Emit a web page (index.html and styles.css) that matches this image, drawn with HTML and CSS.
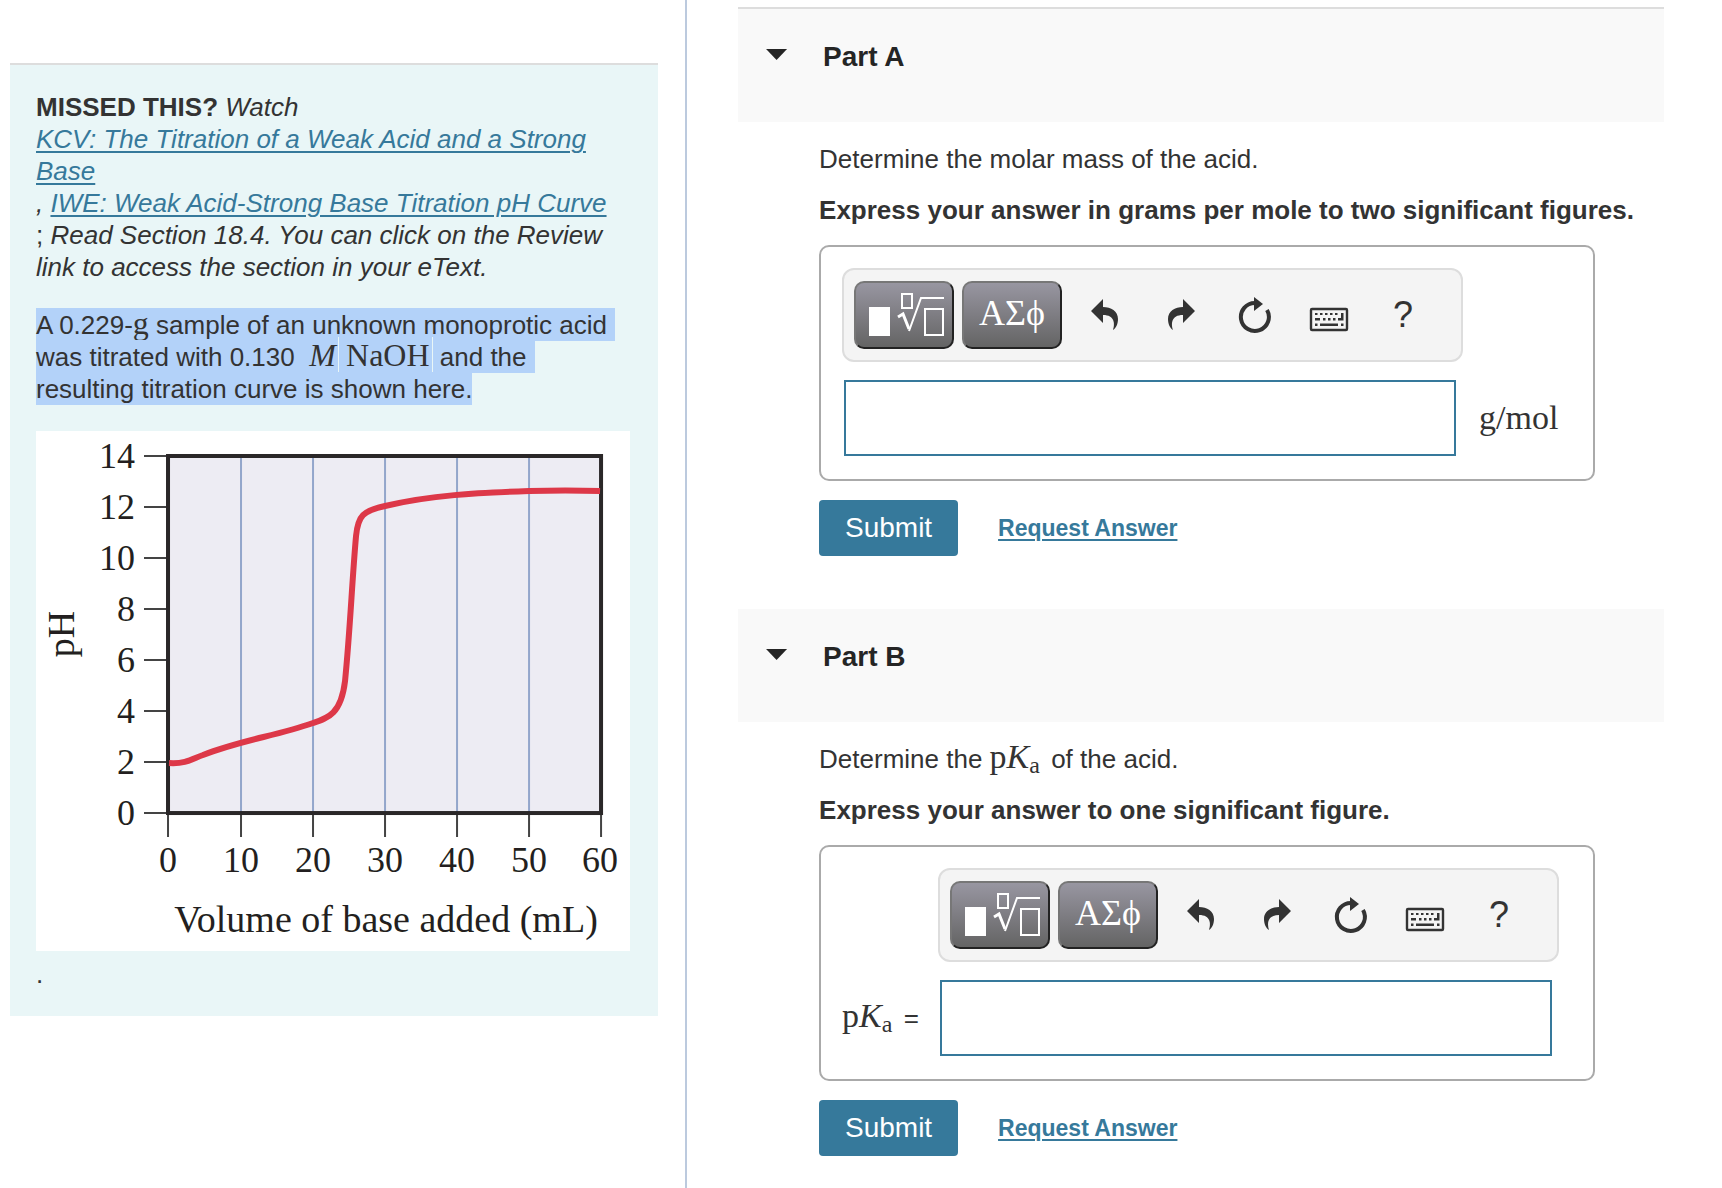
FILE: index.html
```html
<!DOCTYPE html>
<html lang="en">
<head>
    <meta charset="UTF-8">
    <meta name="viewport" content="width=device-width, initial-scale=1.0">
    <title>Titration Problem</title>
    <link rel="stylesheet" href="styles.css">
</head>
<body>
    <!-- Shared icons -->
    <svg class="icon-defs" width="0" height="0" aria-hidden="true">
        <symbol id="icon-template" viewBox="0 0 96 64">
            <rect x="13" y="24" width="21" height="29" fill="#fff"/>
            <g fill="none" stroke="#fff" stroke-width="2">
                <rect x="46" y="11" width="10" height="14"/>
                <rect x="69" y="26" width="18" height="26"/>
                <path d="M53 48 L65 15 H88"/>
                <path d="M42 34 L47 31 L53 46" stroke-width="3"/>
            </g>
        </symbol>
        <symbol id="icon-undo" viewBox="0 0 40 40">
            <path d="M4 16 L16 4 V12 C24 12 31 16 31 24 C31 29 29 33 26 35 C28 29 28 20 16 20 V28 Z"/>
        </symbol>
        <symbol id="icon-redo" viewBox="0 0 40 40">
            <path d="M34 16 L22 4 V12 C14 12 7 16 7 24 C7 29 9 33 12 35 C10 29 10 20 22 20 V28 Z"/>
        </symbol>
        <symbol id="icon-reset" viewBox="0 0 40 40">
            <path d="M32 15 A14 14 0 1 1 20 8" fill="none" stroke="#333" stroke-width="4"/>
            <path d="M19 2 L28 9 L19 16 Z"/>
        </symbol>
        <symbol id="icon-keyboard" viewBox="0 0 40 40">
            <rect x="2" y="14" width="36" height="21" rx="1" fill="none" stroke="#333" stroke-width="2.4"/>
            <path d="M6 18h2.5v2H6z M11 18h2.5v2H11z M16 18h2.5v2H16z M21 18h2.5v2H21z M26 18h2.5v2H26z"/>
            <path d="M6 23h5v2.5H6z M14 23h2.5v2.5H14z M19 23h2.5v2.5H19z M24 23h2.5v2.5H24z M32 18h2.5v7.5H29V23h3z"/>
            <path d="M6 28.5h2.5V31H6z M11 28.5h18V31H11z M32 28.5h2.5V31H32z"/>
        </symbol>
    </svg>

    <div class="page">
        <aside class="left">
            <div class="problem">
                <p><strong>MISSED THIS?</strong> <em>Watch<br>
                    <a href="#">KCV: The Titration of a Weak Acid and a Strong Base</a><br>
                    , <a href="#">IWE: Weak Acid-Strong Base Titration pH Curve</a></em><br>
                    ; <em>Read Section 18.4. You can click on the Review link to access the section in your eText.</em></p>

                <p class="question">
                    <span class="selected pad-end">A 0.229-<span class="math">g</span> sample of an unknown monoprotic acid</span><br>
                    <span class="selected pad-end">was titrated with 0.130 &nbsp;<i class="math unit-end">M</i> <span class="math unit-end">NaOH</span> and the</span><br>
                    <span class="selected">resulting titration curve is shown here.</span>
                </p>

                <svg class="chart" viewBox="0 0 594 520" role="img" aria-label="Titration curve">
                    <rect width="594" height="520" fill="#fff"/>
                    <rect x="132" y="25" width="433" height="357" fill="#edecf3"/>
                    <g class="grid-lines">
                        <path d="M205 25V382 M277 25V382 M349 25V382 M421 25V382 M493 25V382"/>
                    </g>
                    <g class="ticks">
                        <path d="M108 25H132 M108 76H132 M108 127H132 M108 178H132 M108 229H132 M108 280H132 M108 331H132 M108 382H132"/>
                        <path d="M132 382V406 M205 382V406 M277 382V406 M349 382V406 M421 382V406 M493 382V406 M565 382V406"/>
                    </g>
                    <rect class="frame" x="132" y="25" width="433" height="357"/>
                    <path class="curve" d="M133 332 C150 333 156 328 167 324 C205 309 240 305 277 292 C292 287 305 283 309 250 C314 200 316 150 320 105 C322 84 327 80 349 75 C395 64 440 62 493 60 Q530 59 564 60"/>
                    <g class="y-labels">
                        <text x="99" y="37">14</text>
                        <text x="99" y="88">12</text>
                        <text x="99" y="139">10</text>
                        <text x="99" y="190">8</text>
                        <text x="99" y="241">6</text>
                        <text x="99" y="292">4</text>
                        <text x="99" y="343">2</text>
                        <text x="99" y="394">0</text>
                    </g>
                    <g class="x-labels">
                        <text x="132" y="441">0</text>
                        <text x="205" y="441">10</text>
                        <text x="277" y="441">20</text>
                        <text x="349" y="441">30</text>
                        <text x="421" y="441">40</text>
                        <text x="493" y="441">50</text>
                        <text x="564" y="441">60</text>
                        <text class="axis-title" x="350" y="501">Volume of base added (mL)</text>
                        <text class="axis-title" transform="translate(38 203) rotate(-90)">pH</text>
                    </g>
                </svg>
                <p>.</p>
            </div>
        </aside>

        <main class="right">
            <section class="part">
                <header class="part-header first">
                    <button type="button" class="toggle" aria-label="Collapse Part A"></button>
                    <h2>Part A</h2>
                </header>
                <div class="part-body">
                    <p>Determine the molar mass of the acid.</p>
                    <p><strong>Express your answer in grams per mole to two significant figures.</strong></p>
                    <div class="answer-box with-unit">
                        <div class="toolbar">
                            <button type="button" class="palette" aria-label="Templates"><svg><use href="#icon-template"/></svg></button>
                            <button type="button" class="palette symbols">ΑΣϕ</button>
                            <button type="button" class="tool" aria-label="Undo"><svg><use href="#icon-undo"/></svg></button>
                            <button type="button" class="tool" aria-label="Redo"><svg><use href="#icon-redo"/></svg></button>
                            <button type="button" class="tool" aria-label="Reset"><svg><use href="#icon-reset"/></svg></button>
                            <button type="button" class="tool" aria-label="Keyboard"><svg><use href="#icon-keyboard"/></svg></button>
                            <button type="button" class="tool">?</button>
                        </div>
                        <input type="text" class="answer" id="answer-a">
                        <label class="side math" for="answer-a">g/mol</label>
                    </div>
                    <div class="actions">
                        <button type="button" class="submit">Submit</button>
                        <a href="#">Request Answer</a>
                    </div>
                </div>
            </section>

            <section class="part">
                <header class="part-header">
                    <button type="button" class="toggle" aria-label="Collapse Part B"></button>
                    <h2>Part B</h2>
                </header>
                <div class="part-body">
                    <p>Determine the <span class="math term">p<i>K</i><sub>a</sub></span> of the acid.</p>
                    <p><strong>Express your answer to one significant figure.</strong></p>
                    <div class="answer-box with-label">
                        <div class="toolbar">
                            <button type="button" class="palette" aria-label="Templates"><svg><use href="#icon-template"/></svg></button>
                            <button type="button" class="palette symbols">ΑΣϕ</button>
                            <button type="button" class="tool" aria-label="Undo"><svg><use href="#icon-undo"/></svg></button>
                            <button type="button" class="tool" aria-label="Redo"><svg><use href="#icon-redo"/></svg></button>
                            <button type="button" class="tool" aria-label="Reset"><svg><use href="#icon-reset"/></svg></button>
                            <button type="button" class="tool" aria-label="Keyboard"><svg><use href="#icon-keyboard"/></svg></button>
                            <button type="button" class="tool">?</button>
                        </div>
                        <label class="side" for="answer-b"><span class="math term">p<i>K</i><sub>a</sub></span> =</label>
                        <input type="text" class="answer" id="answer-b">
                    </div>
                    <div class="actions">
                        <button type="button" class="submit">Submit</button>
                        <a href="#">Request Answer</a>
                    </div>
                </div>
            </section>
        </main>
    </div>
</body>
</html>
```

FILE: styles.css
```css
* {
    box-sizing: border-box;
}
body {
    margin: 0;
    font-family: "Liberation Sans", Arial, sans-serif;
    font-size: 26px;
    line-height: 32px;
    color: #333;
    background-color: #fff;
}
p, h2 {
    margin: 0;
}
a {
    color: #36799b;
    text-decoration-thickness: 2px;
    text-underline-offset: 3px;
}
button {
    font-family: inherit;
    cursor: pointer;
}
.icon-defs {
    position: absolute;
}
.page {
    display: grid;
    grid-template-columns: 39.9% 1fr;
    min-height: 100vh;
}

/* Left column */
.left {
    padding: 63px 27px 0 10px;
    border-right: 2px solid #bccade;
}
.problem {
    padding: 26px 28px 26px 26px;
    border-top: 2px solid #ddd;
    background-color: #e9f6f7;
}
.question {
    margin-top: 26px;
    white-space: nowrap;
}
.selected {
    padding: 2px 0 1px;
    background-color: #b3d2f9;
}
.pad-end {
    padding-right: 8px;
}
.math {
    font-family: "Liberation Serif", "Times New Roman", serif;
    font-size: 34px;
    line-height: 0;
}
.math sub {
    font-size: 24px;
    line-height: 0;
    vertical-align: -5px;
}
.question .math {
    font-size: 32px;
}
.question .unit-end {
    padding-right: 2px;
    border-right: 1px solid #e9f6f7;
}
.term {
    margin-right: 4px;
}
.chart {
    display: block;
    width: 100%;
    margin: 26px 0 7px;
    font-family: "Liberation Serif", "Times New Roman", serif;
    font-size: 36px;
    fill: #231f20;
}
.axis-title {
    font-size: 38px;
}
.grid-lines {
    stroke: #93a6cb;
    stroke-width: 2;
}
.ticks {
    stroke: #444;
    stroke-width: 2;
}
.frame {
    fill: none;
    stroke: #2a2728;
    stroke-width: 4;
}
.curve {
    fill: none;
    stroke: #dd3848;
    stroke-width: 6;
}
.y-labels {
    text-anchor: end;
}
.x-labels {
    text-anchor: middle;
}

/* Right column */
.right {
    padding: 7px 58px 0 51px;
}
.part-header {
    display: flex;
    align-items: flex-start;
    gap: 36px;
    height: 113px;
    padding: 32px 28px;
    background-color: #f9f9f9;
}
.part-header.first {
    height: 115px;
    border-top: 2px solid #ddd;
}
.part-header h2 {
    font-size: 28px;
    color: #252525;
}
.toggle {
    width: 21px;
    height: 11px;
    margin-top: 8px;
    padding: 0;
    border: none;
    background-color: #252525;
    clip-path: polygon(0 0, 100% 0, 50% 100%);
}
.part-body {
    display: flex;
    flex-direction: column;
    align-items: flex-start;
    gap: 19px;
    padding: 21px 0 53px 81px;
}
.answer-box {
    display: grid;
    align-items: center;
    gap: 18px 16px;
    padding: 21px 34px 23px 21px;
    border: 2px solid #aaa;
    border-radius: 10px;
}
.with-unit {
    grid-template-columns: auto minmax(80px, auto);
}
.with-unit .toolbar {
    grid-column: 1;
}
.with-unit .answer,
.with-unit .side {
    grid-row: 2;
}
.with-label {
    grid-template-columns: minmax(80px, auto) auto;
}
.with-label .toolbar {
    grid-column: 2;
}
.toolbar {
    display: flex;
    align-items: center;
    padding: 11px 21px 11px 10px;
    border: 2px solid #ddd;
    border-radius: 12px;
    background-color: #f4f4f4;
}
.palette {
    display: flex;
    align-items: center;
    justify-content: center;
    width: 100px;
    height: 68px;
    margin-right: 8px;
    padding: 0;
    border: 2px solid;
    border-color: #777 #222 #222 #777;
    border-radius: 10px;
    background-image: linear-gradient(#9896a1, #646464);
    color: #fff;
    font-family: "Liberation Serif", "DejaVu Serif", serif;
    font-size: 36px;
}
.palette svg {
    width: 96px;
    height: 64px;
}
.symbols {
    padding-bottom: 4px;
}
.tool {
    display: flex;
    align-items: center;
    justify-content: center;
    width: 74px;
    height: 68px;
    padding: 0;
    border: none;
    background: none;
    color: #333;
    font-size: 36px;
}
.tool svg {
    width: 40px;
    height: 40px;
    fill: #333;
}
.answer {
    height: 76px;
    margin: 0 7px 0 2px;
    padding: 0 12px;
    border: 2px solid #36799b;
    border-radius: 0;
    font-size: 28px;
}
.side {
    white-space: nowrap;
}
.actions {
    display: flex;
    align-items: center;
    gap: 40px;
}
.actions a {
    font-size: 23px;
    font-weight: bold;
}
.submit {
    width: 139px;
    height: 56px;
    border: none;
    border-radius: 4px;
    background-color: #36799b;
    color: #fff;
    font-size: 28px;
}
```
